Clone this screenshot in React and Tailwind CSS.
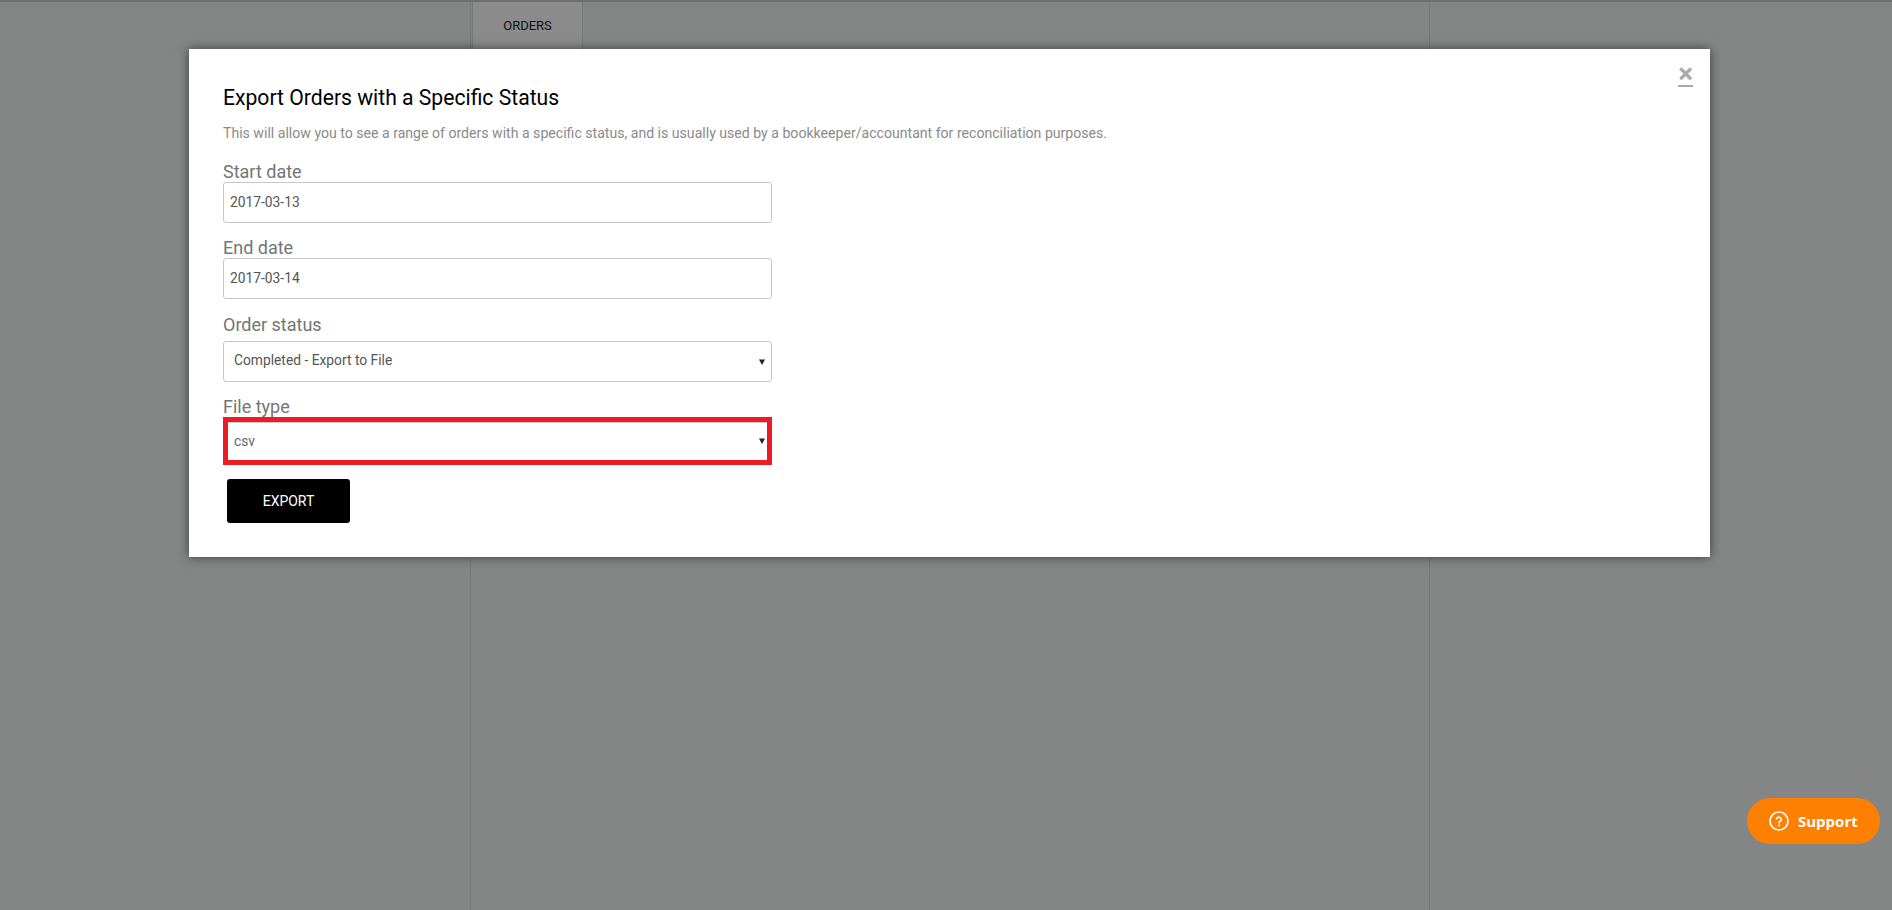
import React from 'react';

const fieldClass = "block w-full h-[41px] rounded-[3px] border border-[#c8c8c8] bg-white text-[13.8px] text-[#555] outline-none";

const DateField = ({ label, value }) => (
  <div className="mb-[15px]">
    <label className="block h-[20px] text-[18px] leading-[20px] text-[#757575]">{label}</label>
    <input readOnly value={value} className={`${fieldClass} px-[6px] pb-[2px]`} />
  </div>
);

const Arrow = () => (
  <svg width="6" height="6" viewBox="0 0 6 6" className="absolute right-[7px] top-1/2 -translate-y-1/2">
    <path d="M0 0.5 H6 L3 6 Z" fill="#222" />
  </svg>
);

const App = () => {
  return (
    <div className="relative h-[910px] w-full overflow-hidden bg-[#848685] font-['Roboto',sans-serif]">
      {/* page behind the overlay */}
      <div className="h-[2px] bg-[#6f6f6f]" />
      <div className="flex h-[908px]">
        <div className="w-[470px]" />
        <div className="w-[960px] border-x border-[#767876]">
          <div className="ml-[1px] flex h-[48px] w-[111px] justify-center border-x border-[#767876] bg-[#8b8b8b] pt-[16px] text-[13px] leading-[16px] text-[#111]">
            ORDERS
          </div>
        </div>
      </div>

      {/* export modal */}
      <div className="absolute left-[189px] top-[49px] h-[508px] w-[1521px] bg-white px-[34px] pt-[37px] shadow-[0_0_10px_rgba(0,0,0,0.55)]">
        <a className="absolute right-[17px] top-[5px] cursor-pointer text-[28px] font-bold leading-[40px] text-[#aaa] underline">×</a>
        <h2 className="text-[21.15px] leading-[24px] text-black">Export Orders with a Specific Status</h2>
        <p className="mt-[14px] text-[14.1px] leading-[18px] text-[#8a8a8a]">
          This will allow you to see a range of orders with a specific status, and is usually used by a bookkeeper/accountant for reconciliation purposes.
        </p>
        <div className="mt-[20px] w-[549px]">
          <DateField label="Start date" value="2017-03-13" />
          <DateField label="End date" value="2017-03-14" />

          <div className="mb-[15px]">
            <label className="block h-[27px] text-[18px] leading-[22px] text-[#757575]">Order status</label>
            <div className="relative">
              <select defaultValue="completed" className={`${fieldClass} appearance-none px-[10px] pb-[2px]`}>
                <option value="completed">Completed - Export to File</option>
              </select>
              <Arrow />
            </div>
          </div>

          <div>
            <label className="block h-[20px] text-[18px] leading-[20px] text-[#757575]">File type</label>
            <div className="relative h-[48px] border-[5px] border-[#ed1c24]">
              <select defaultValue="csv" className="block h-full w-full appearance-none border-t border-[#c8c8c8] bg-white px-[6px] text-[13.8px] text-[#666] outline-none">
                <option value="csv">csv</option>
              </select>
              <svg width="6" height="6" viewBox="0 0 6 6" className="absolute right-[2px] top-1/2 -translate-y-1/2">
                <path d="M0 0.5 H6 L3 6 Z" fill="#222" />
              </svg>
            </div>
          </div>

          <button className="ml-[4px] mt-[14px] h-[44px] w-[123px] rounded-[3px] bg-black text-[14px] font-['Roboto',sans-serif] text-white">EXPORT</button>
        </div>
      </div>

      {/* support bubble */}
      <div className="absolute left-[1747px] top-[798px] flex h-[46px] w-[133px] items-center rounded-full bg-[#ff8000] pl-[22px] text-white">
        <svg width="20" height="20" viewBox="0 0 20 20" fill="none" stroke="currentColor" strokeWidth="1.7" strokeLinecap="round" strokeLinejoin="round">
          <circle cx="10" cy="10" r="9" />
          <path d="M7.6 7.8a2.5 2.5 0 0 1 4.8.6c0 1.6-2.4 2-2.4 3.4" />
          <path d="M10 14.6h.01" strokeWidth="2" />
        </svg>
        <span className="ml-[9px] font-['Open_Sans',sans-serif] text-[15px] font-bold">Support</span>
      </div>
    </div>
  );
};

export default App;
